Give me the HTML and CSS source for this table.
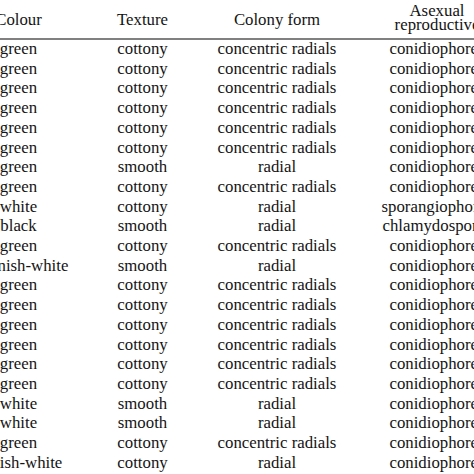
FILE: index.html
```html
<!DOCTYPE html>
<html>
<head>
<meta charset="utf-8">
<link rel="stylesheet" href="styles.css">
</head>
<body>
<div class="frame">
  <div class="table">
    <div class="head">
      <div class="hc">Colour</div>
      <div class="hc">Texture</div>
      <div class="hc">Colony form</div>
      <div class="hc two">Asexual<br>reproductive</div>
    </div>
    <div class="body">
      <div class="row"><span>green</span><span>cottony</span><span>concentric radials</span><span>conidiophores</span></div>
      <div class="row"><span>green</span><span>cottony</span><span>concentric radials</span><span>conidiophores</span></div>
      <div class="row"><span>green</span><span>cottony</span><span>concentric radials</span><span>conidiophores</span></div>
      <div class="row"><span>green</span><span>cottony</span><span>concentric radials</span><span>conidiophores</span></div>
      <div class="row"><span>green</span><span>cottony</span><span>concentric radials</span><span>conidiophores</span></div>
      <div class="row"><span>green</span><span>cottony</span><span>concentric radials</span><span>conidiophores</span></div>
      <div class="row"><span>green</span><span>smooth</span><span>radial</span><span>conidiophores</span></div>
      <div class="row"><span>green</span><span>cottony</span><span>concentric radials</span><span>conidiophores</span></div>
      <div class="row"><span>white</span><span>cottony</span><span>radial</span><span>sporangiophores</span></div>
      <div class="row"><span>black</span><span>smooth</span><span>radial</span><span>chlamydospores</span></div>
      <div class="row"><span>green</span><span>cottony</span><span>concentric radials</span><span>conidiophores</span></div>
      <div class="row"><span>greenish-white</span><span>smooth</span><span>radial</span><span>conidiophores</span></div>
      <div class="row"><span>green</span><span>cottony</span><span>concentric radials</span><span>conidiophores</span></div>
      <div class="row"><span>green</span><span>cottony</span><span>concentric radials</span><span>conidiophores</span></div>
      <div class="row"><span>green</span><span>cottony</span><span>concentric radials</span><span>conidiophores</span></div>
      <div class="row"><span>green</span><span>cottony</span><span>concentric radials</span><span>conidiophores</span></div>
      <div class="row"><span>green</span><span>cottony</span><span>concentric radials</span><span>conidiophores</span></div>
      <div class="row"><span>green</span><span>cottony</span><span>concentric radials</span><span>conidiophores</span></div>
      <div class="row"><span>white</span><span>smooth</span><span>radial</span><span>conidiophores</span></div>
      <div class="row"><span>white</span><span>smooth</span><span>radial</span><span>conidiophores</span></div>
      <div class="row"><span>green</span><span>cottony</span><span>concentric radials</span><span>conidiophores</span></div>
      <div class="row"><span>yellish-white</span><span>cottony</span><span>radial</span><span>conidiophores</span></div>
    </div>
  </div>
</div>
</body>
</html>
```
FILE: styles.css
```css
html, body {
  margin: 0;
  padding: 0;
  background: #ffffff;
}
.frame {
  width: 474px;
  height: 474px;
  overflow: hidden;
  background: #ffffff;
}
.table {
  margin-left: -61px;
  width: 568px;
  font-family: "Liberation Serif", Tinos, "Times New Roman", Times, "Nimbus Roman", "Nimbus Roman No9 L", "DejaVu Serif", serif;
  font-size: 16.8px;
  color: #141414;
}
.head {
  display: grid;
  grid-template-columns: 159px 89px 180px 140px;
  height: 38px;
  border-bottom: 2px solid #808080;
}
.hc {
  text-align: center;
  line-height: 19.71px;
  padding-top: 10px;
  white-space: nowrap;
}
.hc.two {
  line-height: 14.5px;
  padding-top: 3.8px;
}
.body {
  margin-top: -1px;
}
.row {
  display: grid;
  grid-template-columns: 159px 89px 180px 140px;
  height: 19.71px;
  line-height: 19.71px;
}
.row span {
  text-align: center;
  white-space: nowrap;
}
```
